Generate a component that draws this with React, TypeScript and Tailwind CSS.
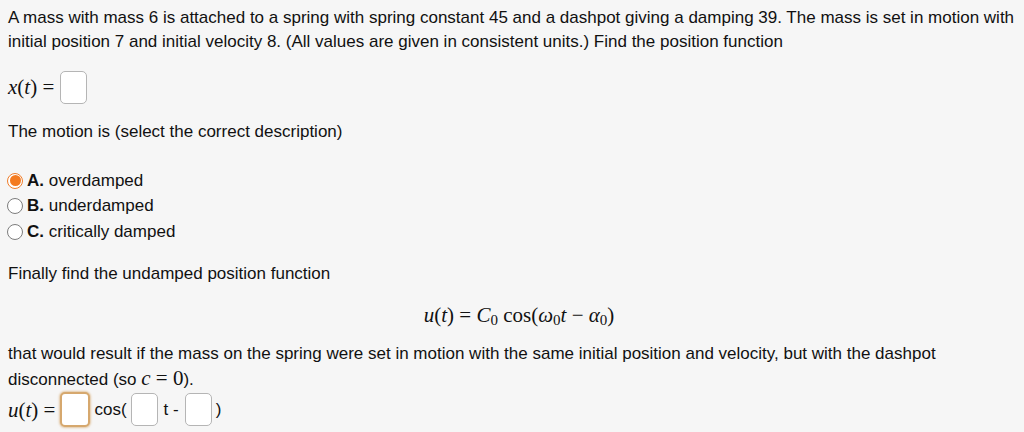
import React from 'react';

const Box = ({ active = false }: { active?: boolean }) => (
  <span
    className={`inline-block align-middle rounded-[5px] bg-white ${
      active
        ? 'border-2 border-[#d6a86e] shadow-[0_0_2px_1px_rgba(214,168,110,0.6)] w-[30px] h-[35px]'
        : 'border border-[#b5b5b5] w-[27px] h-[33px]'
    }`}
  />
);

const Radio = ({ checked = false }: { checked?: boolean }) =>
  checked ? (
    <span className="inline-flex items-center justify-center w-[16px] h-[16px] rounded-full border border-[#ef7d2a] bg-white">
      <span className="w-[11px] h-[11px] rounded-full bg-[#f47b20]" />
    </span>
  ) : (
    <span className="inline-block w-[16px] h-[16px] rounded-full border border-[#7d7d7d] bg-white" />
  );

const M = ({ children }: { children: React.ReactNode }) => (
  <span className="font-['Liberation_Serif',serif] text-[21px]">{children}</span>
);

export default function App() {
  const options = [
    { letter: 'A.', text: 'overdamped', checked: true },
    { letter: 'B.', text: 'underdamped', checked: false },
    { letter: 'C.', text: 'critically damped', checked: false },
  ];

  return (
    <div className="w-[1024px] h-[432px] bg-[#f6f6f6] text-[#111] font-['Liberation_Sans',Arial,sans-serif] text-[17px] leading-[24px] px-[8px] pt-[6px] overflow-hidden whitespace-nowrap">
      <p>
        A mass with mass 6 is attached to a spring with spring constant 45 and a dashpot giving a damping 39. The mass is set in motion with
        <br />
        initial position 7 and initial velocity 8. (All values are given in consistent units.) Find the position function
      </p>

      <div className="mt-[16px] flex items-center gap-[6px] h-[34px]">
        <M>
          <i>x</i>(<i>t</i>) =
        </M>
        <Box />
      </div>

      <p className="mt-[16px]">The motion is (select the correct description)</p>

      <div className="mt-[24px] flex flex-col">
        {options.map((o) => (
          <div key={o.letter} className="flex items-center gap-[4px] h-[25.5px] -ml-[1px]">
            <Radio checked={o.checked} />
            <span>
              <b>{o.letter}</b> {o.text}
            </span>
          </div>
        ))}
      </div>

      <p className="mt-[17px]">Finally find the undamped position function</p>

      <div className="mt-[17px] text-center pl-[14px] h-[30px]">
        <M>
          <i>u</i>(<i>t</i>) = <i>C</i>
          <sub className="text-[15px]">0</sub> cos(<i>ω</i>
          <sub className="text-[15px]">0</sub>
          <i>t</i> − <i>α</i>
          <sub className="text-[15px]">0</sub>)
        </M>
      </div>

      <p className="mt-[9px]">
        that would result if the mass on the spring were set in motion with the same initial position and velocity, but with the dashpot
        <br />
        disconnected (so{' '}
        <M>
          <i>c</i> = 0
        </M>
        ).
      </p>

      <div className="flex items-center h-[36px]">
        <M>
          <i>u</i>(<i>t</i>) =
        </M>
        <span className="ml-[5px]">
          <Box active />
        </span>
        <span className="ml-[4px]">cos(</span>
        <span className="ml-[4px]">
          <Box />
        </span>
        <span className="ml-[6px]">t -</span>
        <span className="ml-[6px]">
          <Box />
        </span>
        <span className="ml-[4px]">)</span>
      </div>
    </div>
  );
}
